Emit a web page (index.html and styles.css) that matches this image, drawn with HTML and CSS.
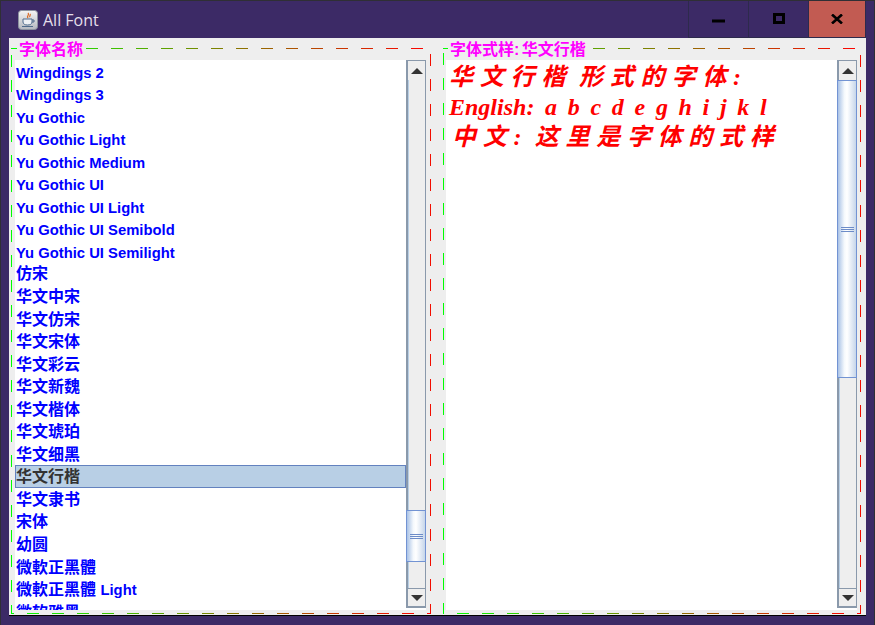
FILE: index.html
```html
<!DOCTYPE html>
<html lang="zh">
<head>
<meta charset="utf-8">
<title>All Font</title>
<link rel="stylesheet" href="styles.css">
</head>
<body>
<div class="window">
  <header class="titlebar">
    <svg class="app-icon" width="20" height="20" viewBox="0 0 20 20">
      <defs>
        <linearGradient id="ig" x1="0" y1="0" x2="0" y2="1">
          <stop offset="0" stop-color="#f4f4f4"/>
          <stop offset="1" stop-color="#b4b8c0"/>
        </linearGradient>
      </defs>
      <rect x="0.5" y="0.5" width="19" height="19" rx="3" fill="url(#ig)" stroke="#8c93a0"/>
      <path d="M10 3c2 2-2 3 0 5M12 4c1 1-1 2 0 3" fill="none" stroke="#d8641c" stroke-width="1.2"/>
      <path d="M5 9h9v3c0 2-2 3-4.500 3S5 14 5 12z" fill="#eef1f5" stroke="#4f6b8c"/>
      <path d="M14 10h2v2h-2" fill="none" stroke="#4f6b8c"/>
      <path d="M4 16.500h11" stroke="#4f6b8c"/>
    </svg>
    <span class="title">All Font</span>
    <div class="controls">
      <div class="ctl">
        <svg class="icon-min" width="13" height="4" viewBox="0 0 13 4"><rect width="13" height="3" y="0.500" fill="#000"/></svg>
      </div>
      <div class="ctl">
        <svg class="icon-top" width="12" height="11" viewBox="0 0 12 11"><rect x="1.500" y="1.500" width="9" height="8" fill="none" stroke="#000" stroke-width="3"/></svg>
      </div>
      <div class="ctl ctl-close">
        <svg class="icon-top" width="12" height="10" viewBox="0 0 12 10"><path d="M1 0.500l10 9M11 0.500l-10 9" stroke="#000" stroke-width="2.600" fill="none"/></svg>
      </div>
    </div>
  </header>

  <main class="content">
    <section class="panel">
      <div class="frame frame-left">
        <span class="edge edge-top"></span>
        <span class="edge edge-right"></span>
        <span class="edge edge-bottom"></span>
        <span class="edge edge-left"></span>
      </div>
      <h2 class="legend">字体名称</h2>
      <div class="list">
        <ul class="rows">
          <li class="latin">Wingdings 2</li>
          <li class="latin">Wingdings 3</li>
          <li class="latin">Yu Gothic</li>
          <li class="latin">Yu Gothic Light</li>
          <li class="latin">Yu Gothic Medium</li>
          <li class="latin">Yu Gothic UI</li>
          <li class="latin">Yu Gothic UI Light</li>
          <li class="latin">Yu Gothic UI Semibold</li>
          <li class="latin">Yu Gothic UI Semilight</li>
          <li>仿宋</li>
          <li>华文中宋</li>
          <li>华文仿宋</li>
          <li>华文宋体</li>
          <li>华文彩云</li>
          <li>华文新魏</li>
          <li>华文楷体</li>
          <li>华文琥珀</li>
          <li>华文细黑</li>
          <li class="selected">华文行楷</li>
          <li>华文隶书</li>
          <li>宋体</li>
          <li>幼圆</li>
          <li>微軟正黑體</li>
          <li>微軟正黑體 <span class="inline-latin">Light</span></li>
          <li>微软雅黑</li>
        </ul>
        <div class="scrollbar">
          <div class="arrow arrow-up"><span class="tri tri-up"></span></div>
          <div class="track track-left">
            <div class="thumb thumb-left"><span class="grip"></span></div>
          </div>
          <div class="arrow arrow-down"><span class="tri tri-down"></span></div>
        </div>
      </div>
    </section>

    <section class="panel panel-right">
      <div class="frame frame-right">
        <span class="edge edge-top"></span>
        <span class="edge edge-right"></span>
        <span class="edge edge-bottom"></span>
        <span class="edge edge-left"></span>
      </div>
      <h2 class="legend">字体式样: 华文行楷</h2>
      <div class="list">
        <div class="preview">
          <p class="line-a">华 文 行 楷 &nbsp;形 式 的 字 体 :</p>
          <p class="line-b">English: a b c d e g h i j k l</p>
          <p class="line-c">中 文 : &nbsp;这 里 是 字 体 的 式 样</p>
        </div>
        <div class="scrollbar">
          <div class="arrow arrow-up"><span class="tri tri-up"></span></div>
          <div class="track track-right">
            <div class="thumb thumb-right"><span class="grip"></span></div>
          </div>
          <div class="arrow arrow-down"><span class="tri tri-down"></span></div>
        </div>
      </div>
    </section>
  </main>
</div>
</body>
</html>
```

FILE: styles.css
```css
* { box-sizing: border-box; }
html, body { margin: 0; padding: 0; }
body { width: 875px; height: 625px; overflow: hidden; background: #3c2a66; }

.window {
  width: 875px;
  height: 625px;
  display: flex;
  flex-direction: column;
  background: #3c2a66;
  border: 1px solid #2f2f35;
  border-bottom: 0;
}

.titlebar {
  height: 37px;
  flex: none;
  display: flex;
  align-items: center;
  padding-left: 17px;
}
.app-icon { flex: none; margin-top: 1px; }
.title {
  margin-left: 5px;
  font: 16px "Open Sans", "Noto Sans", sans-serif;
  color: #e4dfea;
}
.controls {
  margin-left: auto;
  margin-right: 8px;
  display: flex;
  height: 37px;
  align-self: flex-start;
}
.ctl {
  width: 60px;
  height: 37px;
  display: flex;
  align-items: center;
  justify-content: center;
  border-left: 1px solid #2d2a4c;
  border-bottom: 1px solid #2d2a4c;
}
.ctl-close {
  width: 58px;
  background: #c25b52;
  border-right: 1px solid #2d2a4c;
}
.icon-min { margin-top: 4px; }
.icon-top { margin-bottom: 1px; }

.content {
  position: relative;
  flex: none;
  width: 857px;
  height: 578px;
  margin-left: 8px;
  background: #eeeeee;
  border-bottom: 1px solid #000;
  display: flex;
  padding: 22px 0 4px 6px;
  font-family: "Liberation Sans", "Noto Sans CJK SC", sans-serif;
}

.panel { position: relative; width: 411px; height: 550px; }
.panel-right { margin-left: 20px; }

/* dashed, colour-graded titled border drawn round each panel */
.frame { position: absolute; top: -12px; height: 566px; z-index: 1; pointer-events: none; }
.frame-left { left: -4px; width: 420px; }
.frame-right { left: -3px; width: 418px; }
.edge { position: absolute; display: block; }
.edge-top, .edge-bottom {
  left: 0;
  right: 0;
  height: 1px;
  background: linear-gradient(to right, #00ff00, #ff0000);
  -webkit-mask-image: repeating-linear-gradient(to right, #000 0 12px, transparent 12px 25px);
  mask-image: repeating-linear-gradient(to right, #000 0 12px, transparent 12px 25px);
}
.edge-top { top: 0; }
.edge-bottom { bottom: 0; }
.edge-left, .edge-right {
  top: 0;
  bottom: 0;
  width: 1px;
}
.edge-left {
  left: 0;
  background: repeating-linear-gradient(to bottom, transparent 0 7px, #00ff00 7px 19px, transparent 19px 25px);
}
.edge-right {
  right: 0;
  background: repeating-linear-gradient(to bottom, transparent 0 6px, #f20d00 6px 18px, transparent 18px 25px);
}
.frame-left .edge-bottom {
  -webkit-mask-image: repeating-linear-gradient(to right, transparent 0 16px, #000 16px 28px, transparent 28px 41px);
  mask-image: repeating-linear-gradient(to right, #000 0 3px, transparent 3px 16px, #000 16px 25px);
}
.frame-right .edge-left {
  background: repeating-linear-gradient(to bottom, transparent 0 5px, #00ff00 5px 17px, transparent 17px 25px);
}
.frame-right .edge-right {
  background: repeating-linear-gradient(to bottom, transparent 0 7px, #f20d00 7px 19px, transparent 19px 25px);
}
.frame-right .edge-bottom {
  -webkit-mask-image: repeating-linear-gradient(to right, #000 0 1px, transparent 1px 14px, #000 14px 25px);
  mask-image: repeating-linear-gradient(to right, #000 0 1px, transparent 1px 14px, #000 14px 25px);
}

.legend {
  position: absolute;
  top: -20px;
  left: 2px;
  margin: 0;
  padding: 0 2px;
  background: #eeeeee;
  color: #ff00ff;
  font-size: 16px;
  font-weight: bold;
  line-height: 20px;
  word-spacing: -2px;
  white-space: nowrap;
  z-index: 2;
}

.list { height: 100%; display: flex; background: #ffffff; position: relative; }

.rows {
  flex: 1;
  margin: 0;
  padding: 0;
  list-style: none;
  overflow: hidden;
  color: #0000ff;
  font-size: 16px;
  font-weight: bold;
}
.rows li {
  height: 22.550px;
  line-height: 24px;
  padding-left: 1px;
  white-space: nowrap;
}
.rows li:first-child { margin-top: -0.500px; }
.rows .latin { font-size: 14.800px; line-height: 26px; }
.inline-latin { font-size: 14.800px; }
.rows .selected {
  background: #b8cfe5;
  color: #333333;
  outline: 1px solid #6382bf;
  outline-offset: -1px;
}

.preview {
  flex: 1;
  overflow: hidden;
  color: #ff0000;
  font-family: "Liberation Serif", "Noto Sans CJK SC", serif;
  font-size: 24px;
  font-style: italic;
  font-weight: bold;
  padding-left: 3px;
}
.preview p { margin: 0; height: 30px; line-height: 34px; white-space: nowrap; }
.line-a { word-spacing: 0.800px; }
.line-b { word-spacing: 4.700px; }
.preview .line-c { padding-left: 3px; word-spacing: 0.700px; }

.scrollbar {
  flex: none;
  width: 20px;
  display: flex;
  flex-direction: column;
}
.arrow {
  height: 20px;
  flex: none;
  background: #eeeeee;
  border: 1px solid #8a99ab;
  border-left-width: 2px;
  display: flex;
  align-items: center;
  justify-content: center;
}
.arrow-up { border-bottom: 0; }
.arrow-down { margin-bottom: 2px; border-bottom-width: 2px; }
.tri { width: 0; height: 0; border-left: 6px solid transparent; border-right: 6px solid transparent; }
.tri-up { border-bottom: 6px solid #333333; }
.tri-down { border-top: 6px solid #333333; }

.track {
  flex: 1;
  position: relative;
  background: #eeeeee;
  border-left: 2px solid #8a99ab;
  border-right: 1px solid #8a99ab;
  box-shadow: inset 1px 0 0 #b8cfe5;
  display: flex;
  flex-direction: column;
}
.thumb {
  flex: none;
  margin-left: -2px;
  margin-right: -1px;
  border: 1px solid #7293d3;
  background: linear-gradient(to right, #a9c2e6, #f4f8fc 35%, #ffffff 50%, #c6d6ea);
  display: flex;
  align-items: center;
  justify-content: center;
}
.track-left { padding-top: 430px; }
.thumb-left { height: 52px; }
.track-right { padding-top: 0; }
.thumb-right { height: 298px; }
.grip {
  width: 13px;
  height: 5px;
  border-top: 1px solid #6d8cc8;
  border-bottom: 1px solid #6d8cc8;
  position: relative;
}
.grip::after {
  content: "";
  position: absolute;
  left: 0;
  right: 0;
  top: 1px;
  height: 1px;
  background: #6d8cc8;
}
```
